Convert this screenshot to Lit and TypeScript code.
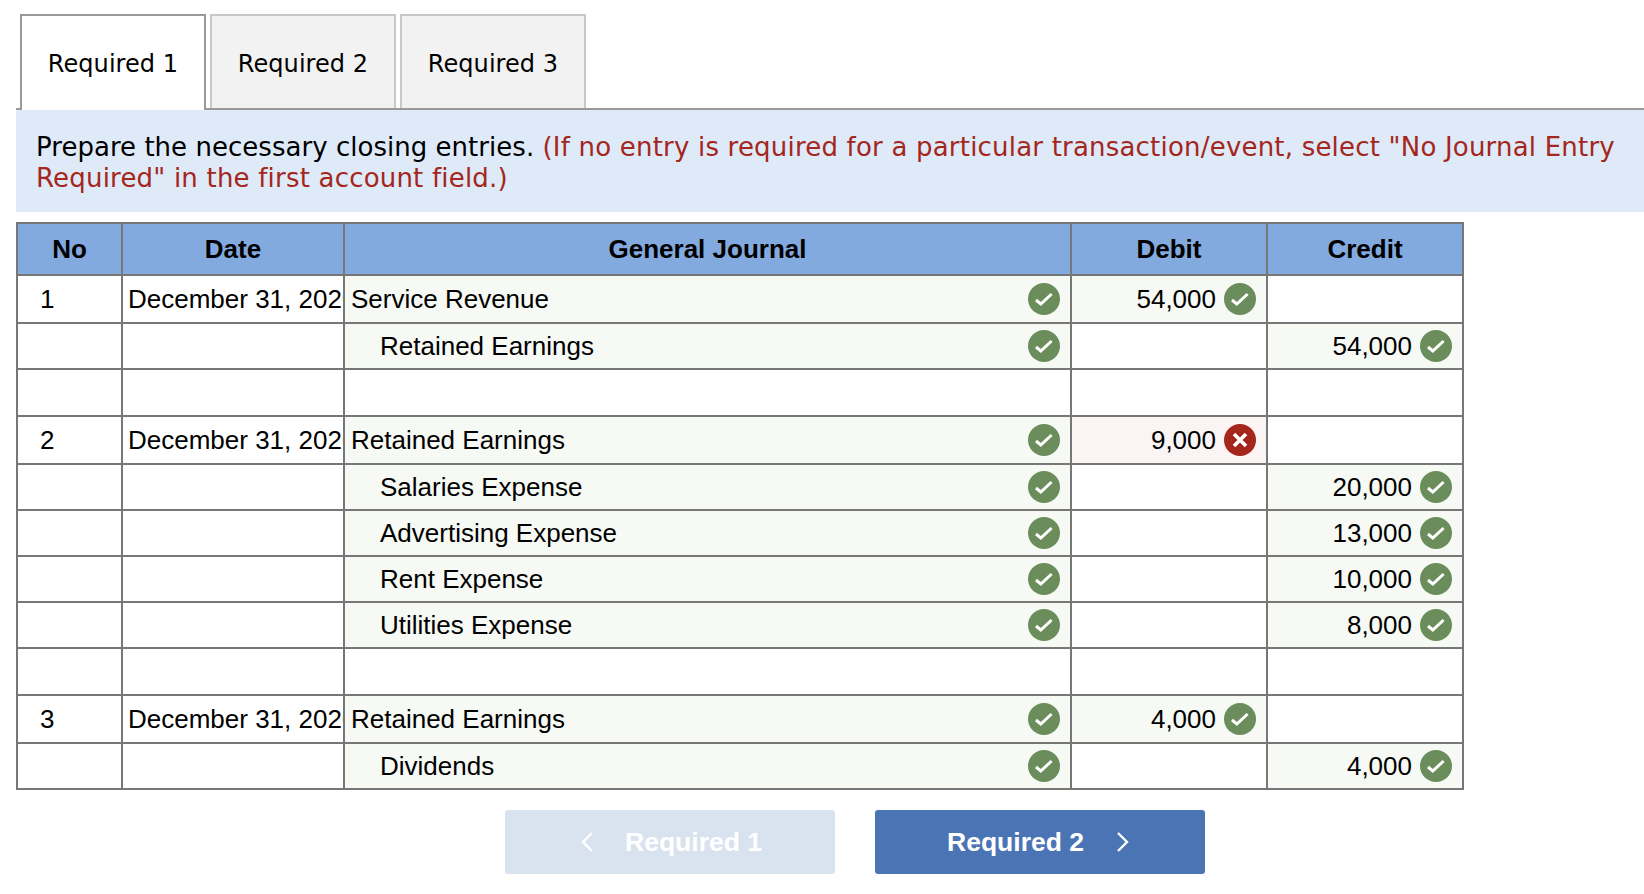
import { LitElement, html, css, svg } from "lit";
import { customElement } from "lit/decorators.js";

type Mark = "ok" | "bad";
interface Row { h: number; no?: string; date?: string; acct?: string; indent?: boolean; acctMark?: boolean; debit?: string; debitMark?: Mark; credit?: string; }

const D = "December 31, 2020";
const rows: Row[] = [
  { h: 48, no: "1", date: D, acct: "Service Revenue", acctMark: true, debit: "54,000", debitMark: "ok" },
  { h: 46, acct: "Retained Earnings", indent: true, acctMark: true, credit: "54,000" },
  { h: 47 },
  { h: 48, no: "2", date: D, acct: "Retained Earnings", acctMark: true, debit: "9,000", debitMark: "bad" },
  { h: 46, acct: "Salaries Expense", indent: true, acctMark: true, credit: "20,000" },
  { h: 46, acct: "Advertising Expense", indent: true, acctMark: true, credit: "13,000" },
  { h: 46, acct: "Rent Expense", indent: true, acctMark: true, credit: "10,000" },
  { h: 46, acct: "Utilities Expense", indent: true, acctMark: true, credit: "8,000" },
  { h: 47 },
  { h: 48, no: "3", date: D, acct: "Retained Earnings", acctMark: true, debit: "4,000", debitMark: "ok" },
  { h: 46, acct: "Dividends", indent: true, acctMark: true, credit: "4,000" },
];

const icon = (m: Mark) => html`<svg class="mark" viewBox="0 0 32 32" width="32" height="32" aria-hidden="true">
  ${m === "ok"
    ? svg`<circle cx="16" cy="16" r="16" fill="#6a8d5b"/><path d="M8 17l4.8 4L23.6 11" fill="none" stroke="#fff" stroke-width="3"/>`
    : svg`<circle cx="16" cy="16" r="16" fill="#a4261d"/><path d="M10 10l12 12M22 10L10 22" fill="none" stroke="#fff" stroke-width="3.6"/>`}
</svg>`;

@customElement("app-root")
export class AppRoot extends LitElement {
  static styles = css`
    :host { display: block; background: #fff; height: 894px; overflow: hidden; padding-top: 14px; box-sizing: border-box; }
    .tabs { display: flex; gap: 4px; margin-left: 16px; padding-left: 4px; border-bottom: 2px solid #999; height: 94px; }
    .tab { width: 186px; height: 94px; box-sizing: border-box; border: 2px solid #c8c8c8; border-bottom: 0; background: #f2f2f2;
      display: flex; align-items: center; justify-content: center; padding-top: 3px;
      font: 24px "DejaVu Sans", sans-serif; letter-spacing: 0.06px; color: #000; }
    .tab.on { height: 96px; border-color: #999; background: #fff; position: relative; z-index: 1; padding-top: 1px; }
    .note { margin-left: 16px; background: #deeaf7; height: 102px; box-sizing: border-box; padding: 22px 20px 0 20px;
      font: 26px/31px "DejaVu Sans", sans-serif; letter-spacing: 0.03px; color: #000; }
    .note em { font-style: normal; color: #a4261d; letter-spacing: 0.2px; }
    table { margin: 10px 0 0 16px; width: 1448px; border-collapse: collapse; table-layout: fixed; font: 26px "Liberation Sans", Arial, sans-serif; color: #000; }
    th, td { border: 2px solid #777; padding: 0; overflow: hidden; white-space: nowrap; vertical-align: middle; }
    th { background: #82aadf; font-weight: 700; text-align: center; height: 50px; }
    .no { padding-left: 22px; }
    .date { padding-left: 5px; }
    .ok { background: #f6f9f4; }
    .bad { background: #faf4f4; }
    .cell { display: flex; align-items: center; gap: 8px; padding: 0 10px 0 6px; }
    .cell.amt { justify-content: flex-end; }
    .grow { flex: 1; }
    .indent { padding-left: 35px; }
    .mark { display: block; flex: none; }
    .nav { display: flex; gap: 40px; margin: 20px 0 0 505px; }
    .btn { width: 330px; height: 64px; border: 0; border-radius: 3px; padding: 0 3px 0 0; background: #4a74b3; color: #fff;
      font: 700 26.5px "Liberation Sans", Arial, sans-serif; display: flex; align-items: center; justify-content: center; gap: 32px; }
    .btn.off { background: #d9e3f0; padding: 0 0 0 2px; gap: 31px; }
    .btn svg { display: block; flex: none; }
  `;

  render() {
    return html`
      <div class="tabs">
        <div class="tab on">Required 1</div>
        <div class="tab">Required 2</div>
        <div class="tab">Required 3</div>
      </div>
      <div class="note">Prepare the necessary closing entries. <em>(If no entry is required for a particular transaction/event, select "No Journal Entry Required" in the first account field.)</em></div>
      <table>
        <colgroup><col style="width:105px"/><col style="width:222px"/><col style="width:727px"/><col style="width:196px"/><col style="width:196px"/></colgroup>
        <thead><tr><th>No</th><th>Date</th><th>General Journal</th><th>Debit</th><th>Credit</th></tr></thead>
        <tbody>
          ${rows.map((r) => html`<tr style="height:${r.h}px">
            <td class="no">${r.no ?? ""}</td>
            <td class="date">${r.date ?? ""}</td>
            <td class=${r.acct ? "ok" : ""}>${r.acct ? html`<div class="cell ${r.indent ? "indent" : ""}"><span class="grow">${r.acct}</span>${icon("ok")}</div>` : ""}</td>
            <td class=${r.debitMark ?? ""}>${r.debit ? html`<div class="cell amt">${r.debit}${icon(r.debitMark!)}</div>` : ""}</td>
            <td class=${r.credit ? "ok" : ""}>${r.credit ? html`<div class="cell amt">${r.credit}${icon("ok")}</div>` : ""}</td>
          </tr>`)}
        </tbody>
      </table>
      <div class="nav">
        <button class="btn off"><svg width="14" height="20" viewBox="0 0 14 20"><path d="M12 1L3 10l9 9" fill="none" stroke="#fff" stroke-width="2.4"/></svg>Required 1</button>
        <button class="btn">Required 2<svg width="14" height="20" viewBox="0 0 14 20"><path d="M2 1l9 9-9 9" fill="none" stroke="#fff" stroke-width="2.4"/></svg></button>
      </div>
    `;
  }
}
